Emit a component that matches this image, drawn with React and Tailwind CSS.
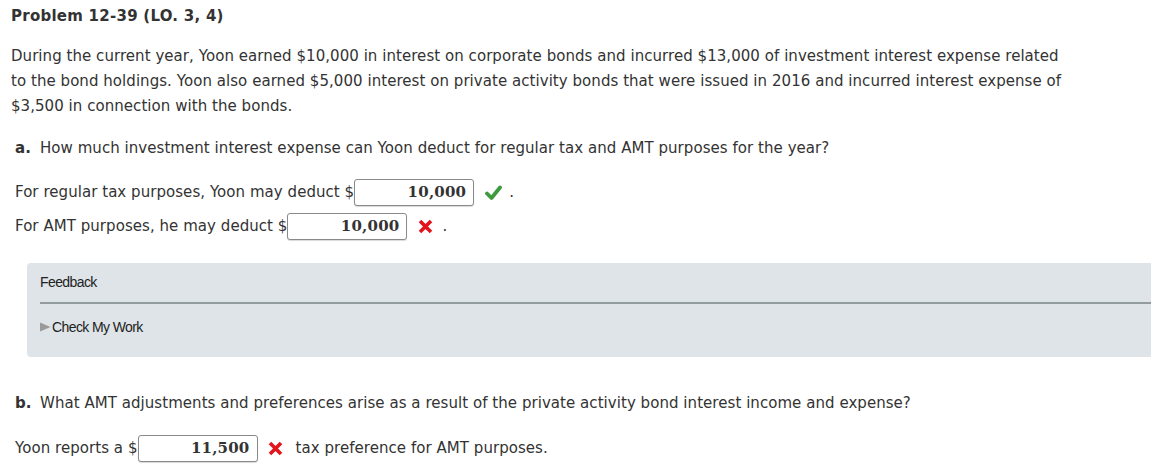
import React from "react";

function Box({ value }) {
  return (
    <span className="inline-flex items-center justify-end h-[27px] w-[120px] border border-[#8a8a8a] rounded-[3px] bg-white pr-[7px] font-['DejaVu_Serif',serif] font-bold text-[15px] text-[#333] tracking-[0.2px] shadow-[0_1px_1px_rgba(0,0,0,0.15)]">
      {value}
    </span>
  );
}

function Check() {
  return (
    <svg width="17" height="16" viewBox="0 0 17 16" className="inline-block">
      <path d="M2 8.5 L6.5 13 L15 2.5" stroke="#3d9a3d" strokeWidth="3.8" fill="none" strokeLinecap="round" strokeLinejoin="round" />
    </svg>
  );
}

function Cross() {
  return (
    <svg width="15" height="15" viewBox="0 0 15 15" className="inline-block">
      <path d="M2 2 L13 13 M13 2 L2 13" stroke="#e3141b" strokeWidth="3.6" fill="none" strokeLinecap="butt" />
    </svg>
  );
}

export default function App() {
  return (
    <div className="w-[1151px] h-[474px] overflow-hidden bg-white text-[#333] font-['DejaVu_Sans',sans-serif] text-[15px] tracking-[0.05px]">
      <div className="pl-[11px]">
        <h1 className="pt-[7px] font-bold text-[15px] leading-[18px] tracking-[0.25px]">Problem 12-39 (LO. 3, 4)</h1>
        <p className="mt-[19px] leading-[25px] w-[1060px]">
          During the current year, Yoon earned $10,000 in interest on corporate bonds and incurred $13,000 of investment interest expense related to the bond holdings. Yoon also earned $5,000 interest on private activity bonds that were issued in 2016 and incurred interest expense of $3,500 in connection with the bonds.
        </p>
        <div className="mt-[17px] pl-[4px] leading-[25px] flex">
          <span className="font-bold w-[25px]">a.</span>
          <span>How much investment interest expense can Yoon deduct for regular tax and AMT purposes for the year?</span>
        </div>
        <div className="mt-[18px] pl-[4px] flex flex-col gap-[7px]">
          <div className="flex items-center h-[27px]">
            <span>For regular tax purposes, Yoon may deduct $</span>
            <Box value="10,000" />
            <span className="ml-[11px] flex items-center"><Check /></span>
            <span className="ml-[7px]">.</span>
          </div>
          <div className="flex items-center h-[27px]">
            <span>For AMT purposes, he may deduct $</span>
            <Box value="10,000" />
            <span className="ml-[11px] flex items-center"><Cross /></span>
            <span className="ml-[9px]">.</span>
          </div>
        </div>
        <div className="mt-[23px] ml-[16px] bg-[#dee4e7] rounded-l-[4px] h-[94px] pl-[13px] font-['Liberation_Sans',sans-serif] text-[14px] tracking-[-0.6px] text-[#222]">
          <div className="pt-[11px] leading-[16px]">Feedback</div>
          <div className="mt-[12px] border-t-2 border-[#939c9f]"></div>
          <div className="mt-[15px] flex items-center leading-[16px]">
            <svg width="11" height="10" viewBox="0 0 11 10" className="mr-[1px]"><path d="M0 0.5 L10.5 5 L0 9.5 Z" fill="#9a9a9a" /></svg>
            <span>Check My Work</span>
          </div>
        </div>
        <div className="mt-[34px] pl-[4px] leading-[25px] flex">
          <span className="font-bold w-[25px]">b.</span>
          <span>What AMT adjustments and preferences arise as a result of the private activity bond interest income and expense?</span>
        </div>
        <div className="mt-[19px] pl-[4px] flex items-center h-[27px]">
          <span>Yoon reports a $</span>
          <Box value="11,500" />
          <span className="ml-[10px] flex items-center"><Cross /></span>
          <span className="ml-[13px]">tax preference for AMT purposes.</span>
        </div>
      </div>
    </div>
  );
}
